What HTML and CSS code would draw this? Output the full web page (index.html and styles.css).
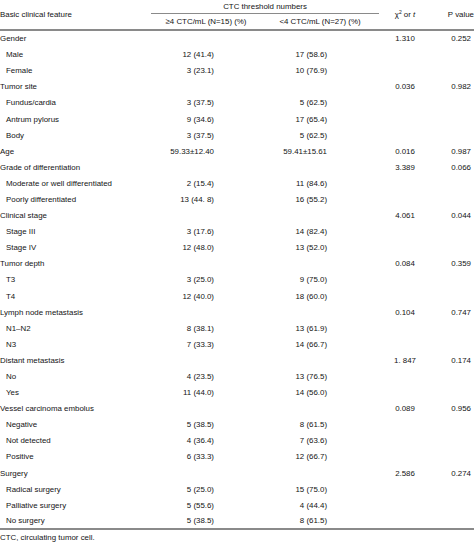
FILE: index.html
```html
<!DOCTYPE html>
<html>
<head>
<meta charset="utf-8">
<link rel="stylesheet" href="styles.css">
</head>
<body>
<table class="tbl">
  <colgroup>
    <col class="c-label"><col class="c-a"><col class="c-b"><col class="c-chi"><col class="c-p">
  </colgroup>
  <thead>
    <tr class="h1">
      <th rowspan="2" class="h-label">Basic clinical feature</th>
      <th colspan="2" class="h-group">CTC threshold numbers</th>
      <th rowspan="2" class="h-chi">χ<sup>2</sup> or <i>t</i></th>
      <th rowspan="2" class="h-p">P value</th>
    </tr>
    <tr class="h2">
      <th class="h-sub">≥4 CTC/mL (N=15) (%)</th>
      <th class="h-sub">&lt;4 CTC/mL (N=27) (%)</th>
    </tr>
  </thead>
  <tbody>
    <tr><td class="cat">Gender</td><td class="va"></td><td class="vb"></td><td class="vc">1.310</td><td class="vp">0.252</td></tr>
    <tr><td class="sub">Male</td><td class="va">12 (41.4)</td><td class="vb">17 (58.6)</td><td class="vc"></td><td class="vp"></td></tr>
    <tr><td class="sub">Female</td><td class="va">3 (23.1)</td><td class="vb">10 (76.9)</td><td class="vc"></td><td class="vp"></td></tr>
    <tr><td class="cat">Tumor site</td><td class="va"></td><td class="vb"></td><td class="vc">0.036</td><td class="vp">0.982</td></tr>
    <tr><td class="sub">Fundus/cardia</td><td class="va">3 (37.5)</td><td class="vb">5 (62.5)</td><td class="vc"></td><td class="vp"></td></tr>
    <tr><td class="sub">Antrum pylorus</td><td class="va">9 (34.6)</td><td class="vb">17 (65.4)</td><td class="vc"></td><td class="vp"></td></tr>
    <tr><td class="sub">Body</td><td class="va">3 (37.5)</td><td class="vb">5 (62.5)</td><td class="vc"></td><td class="vp"></td></tr>
    <tr><td class="cat">Age</td><td class="va">59.33±12.40</td><td class="vb">59.41±15.61</td><td class="vc">0.016</td><td class="vp">0.987</td></tr>
    <tr><td class="cat">Grade of differentiation</td><td class="va"></td><td class="vb"></td><td class="vc">3.389</td><td class="vp">0.066</td></tr>
    <tr><td class="sub">Moderate or well differentiated</td><td class="va">2 (15.4)</td><td class="vb">11 (84.6)</td><td class="vc"></td><td class="vp"></td></tr>
    <tr><td class="sub">Poorly differentiated</td><td class="va">13 (44. 8)</td><td class="vb">16 (55.2)</td><td class="vc"></td><td class="vp"></td></tr>
    <tr><td class="cat">Clinical stage</td><td class="va"></td><td class="vb"></td><td class="vc">4.061</td><td class="vp">0.044</td></tr>
    <tr><td class="sub">Stage III</td><td class="va">3 (17.6)</td><td class="vb">14 (82.4)</td><td class="vc"></td><td class="vp"></td></tr>
    <tr><td class="sub">Stage IV</td><td class="va">12 (48.0)</td><td class="vb">13 (52.0)</td><td class="vc"></td><td class="vp"></td></tr>
    <tr><td class="cat">Tumor depth</td><td class="va"></td><td class="vb"></td><td class="vc">0.084</td><td class="vp">0.359</td></tr>
    <tr><td class="sub">T3</td><td class="va">3 (25.0)</td><td class="vb">9 (75.0)</td><td class="vc"></td><td class="vp"></td></tr>
    <tr><td class="sub">T4</td><td class="va">12 (40.0)</td><td class="vb">18 (60.0)</td><td class="vc"></td><td class="vp"></td></tr>
    <tr><td class="cat">Lymph node metastasis</td><td class="va"></td><td class="vb"></td><td class="vc">0.104</td><td class="vp">0.747</td></tr>
    <tr><td class="sub">N1–N2</td><td class="va">8 (38.1)</td><td class="vb">13 (61.9)</td><td class="vc"></td><td class="vp"></td></tr>
    <tr><td class="sub">N3</td><td class="va">7 (33.3)</td><td class="vb">14 (66.7)</td><td class="vc"></td><td class="vp"></td></tr>
    <tr><td class="cat">Distant metastasis</td><td class="va"></td><td class="vb"></td><td class="vc">1. 847</td><td class="vp">0.174</td></tr>
    <tr><td class="sub">No</td><td class="va">4 (23.5)</td><td class="vb">13 (76.5)</td><td class="vc"></td><td class="vp"></td></tr>
    <tr><td class="sub">Yes</td><td class="va">11 (44.0)</td><td class="vb">14 (56.0)</td><td class="vc"></td><td class="vp"></td></tr>
    <tr><td class="cat">Vessel carcinoma embolus</td><td class="va"></td><td class="vb"></td><td class="vc">0.089</td><td class="vp">0.956</td></tr>
    <tr><td class="sub">Negative</td><td class="va">5 (38.5)</td><td class="vb">8 (61.5)</td><td class="vc"></td><td class="vp"></td></tr>
    <tr><td class="sub">Not detected</td><td class="va">4 (36.4)</td><td class="vb">7 (63.6)</td><td class="vc"></td><td class="vp"></td></tr>
    <tr><td class="sub">Positive</td><td class="va">6 (33.3)</td><td class="vb">12 (66.7)</td><td class="vc"></td><td class="vp"></td></tr>
    <tr><td class="cat">Surgery</td><td class="va"></td><td class="vb"></td><td class="vc">2.586</td><td class="vp">0.274</td></tr>
    <tr><td class="sub">Radical surgery</td><td class="va">5 (25.0)</td><td class="vb">15 (75.0)</td><td class="vc"></td><td class="vp"></td></tr>
    <tr><td class="sub">Palliative surgery</td><td class="va">5 (55.6)</td><td class="vb">4 (44.4)</td><td class="vc"></td><td class="vp"></td></tr>
    <tr class="last"><td class="sub">No surgery</td><td class="va">5 (38.5)</td><td class="vb">8 (61.5)</td><td class="vc"></td><td class="vp"></td></tr>
  </tbody>
</table>
<p class="note">CTC, circulating tumor cell.</p>
</body>
</html>
```

FILE: styles.css
```css
html, body {
  margin: 0;
  padding: 0;
  background: #ffffff;
}
body {
  width: 474px;
  overflow: hidden;
  font-family: "Liberation Sans", Arial, sans-serif;
  font-size: 7.9px;
  color: #141414;
}
.tbl {
  width: 474px;
  table-layout: fixed;
  border-collapse: collapse;
  border-spacing: 0;
}
.c-label { width: 151px; }
.c-a { width: 110px; }
.c-b { width: 118px; }
.c-chi { width: 52px; }
.c-p { width: 43px; }

.tbl th, .tbl td {
  padding: 0;
  font-weight: normal;
  white-space: nowrap;
  line-height: 10px;
}
.tbl thead {
  border-bottom: 2px solid #8a8a8a;
}
.h1 th { height: 13px; }
.h2 th { height: 15px; }
.h-label { text-align: left; padding-left: 1px; }
.h-group {
  text-align: center;
  border-bottom: 1px solid #8a8a8a;
  padding-left: 12px;
}
.h-sub { text-align: center; }
.h-chi { text-align: center; }
.h-p { text-align: right; padding-right: 2px; }
.h-chi sup {
  font-size: 5px;
  vertical-align: 3px;
  line-height: 0;
}

.tbl tbody {
  border-bottom: 2px solid #8a8a8a;
}
.tbl tbody td {
  height: 16.1px;
  vertical-align: middle;
}
.tbl tbody .last td {
  height: 14.6px;
}
.cat { text-align: left; }
.tbl .sub { text-align: left; padding-left: 6px; }
.tbl .va { text-align: right; padding-right: 47px; }
.tbl .vb { text-align: right; padding-right: 52px; }
.tbl .vc { text-align: center; }
.tbl .vp { text-align: right; padding-right: 3px; }

.note {
  margin: 3px 0 0 0;
  line-height: 10px;
}
```
